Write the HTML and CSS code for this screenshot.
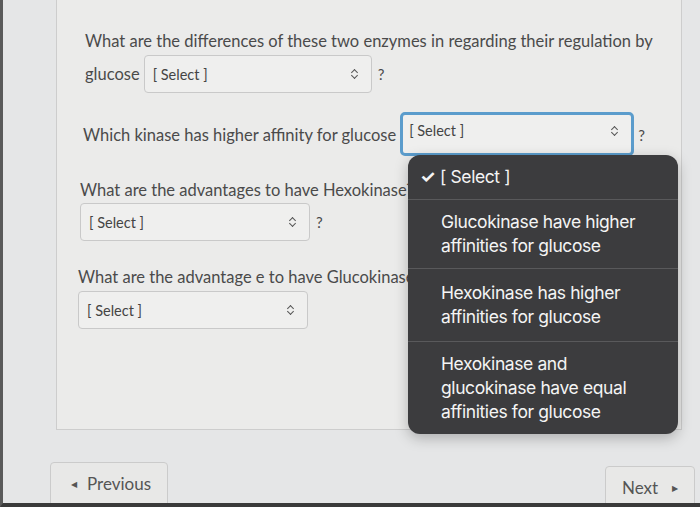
FILE: index.html
```html
<!DOCTYPE html>
<html lang="en">
<head>
    <meta charset="UTF-8">
    <meta name="viewport" content="width=device-width, initial-scale=1.0">
    <title>Quiz</title>
    <link rel="stylesheet" href="styles.css">
</head>
<body>
    <div class="screen">
        <div class="card">
            <div class="question q1">
                <div class="line">What are the differences of these two enzymes in regarding their regulation by</div>
                <div class="row">
                    <span>glucose</span>
                    <div class="select w228"><span>[ Select ]</span><span class="arrows"></span></div>
                    <span class="qmark">?</span>
                </div>
            </div>

            <div class="question q2">
                <div class="row">
                    <span>Which kinase has higher affinity for glucose</span>
                    <div class="select focused w234"><span>[ Select ]</span><span class="arrows"></span></div>
                    <span class="qmark">?</span>
                </div>
            </div>

            <div class="question q3">
                <div class="line">What are the advantages to have Hexokinase?</div>
                <div class="row">
                    <div class="select w230"><span>[ Select ]</span><span class="arrows"></span></div>
                    <span class="qmark">?</span>
                </div>
            </div>

            <div class="question q4">
                <div class="line">What are the advantage e to have Glucokinase?</div>
                <div class="row">
                    <div class="select w230"><span>[ Select ]</span><span class="arrows"></span></div>
                </div>
            </div>

            <!-- open native picker for the second select -->
            <ul class="menu">
                <li class="checked"><span class="check">&#10003;</span>[ Select ]</li>
                <li>Glucokinase have higher<br>affinities for glucose</li>
                <li class="tall">Hexokinase has higher<br>affinities for glucose</li>
                <li>Hexokinase and<br>glucokinase have equal<br>affinities for glucose</li>
            </ul>
        </div>

        <div class="footer">
            <button class="nav-btn prev"><span class="tri">&#9664;</span>Previous</button>
            <button class="nav-btn next">Next<span class="tri">&#9654;</span></button>
        </div>
    </div>
</body>
</html>
```

FILE: styles.css
```css
html, body {
    margin: 0;
    padding: 0;
}
body {
    width: 700px;
    height: 507px;
    overflow: hidden;
    background-color: #e5e6e7;
    font-family: Lato, 'Open Sans', sans-serif;
    color: #4a4a4a;
    border-left: 3px solid #5a5a5a;
    box-sizing: border-box;
    border-bottom: 4px solid #3a3a3a;
}
.screen {
    height: 503px;
}
.card {
    position: relative;
    margin: 0 18px 0 53px;
    height: 430px;
    box-sizing: border-box;
    border: 1px solid #cdcdcd;
    border-top: none;
    background-color: #ebebea;
    padding: 29px 0 0 27px;
    font-size: 16.5px;
}
.line {
    height: 24px;
    line-height: 24px;
    white-space: nowrap;
}
.row {
    display: flex;
    align-items: center;
    gap: 4px;
    white-space: nowrap;
}
.q1 {
    margin-left: 1px;
}
.q1 .row {
    margin-top: 2px;
}
.q2 {
    margin-top: 21px;
    margin-left: -1px;
}
.q3 {
    margin-top: 22px;
    margin-left: -4px;
}
.q4 {
    margin-top: 24px;
    margin-left: -6px;
}
.q3 .row {
    margin-top: 1px;
}
.q4 .row {
    margin-top: 2px;
}
.select {
    display: flex;
    align-items: center;
    justify-content: space-between;
    height: 38px;
    box-sizing: border-box;
    padding: 0 12px 0 8px;
    background-color: #efefee;
    border: 1px solid #c9c9c9;
    border-radius: 4px;
    font-size: 14.5px;
    color: #444;
}
.select.focused {
    height: 44px;
    border: 3px solid #5b9ccc;
    border-radius: 5px;
    padding-left: 6px;
    align-items: flex-start;
    padding-top: 7px;
    margin-top: -2px;
}
.select.focused .arrows {
    margin-top: 4px;
}
.w228 { width: 228px; }
.w230 { width: 230px; }
.w234 { width: 234px; }
.arrows {
    position: relative;
    width: 8px;
    height: 10px;
}
.arrows::before, .arrows::after {
    content: "";
    position: absolute;
    left: 1px;
    width: 4px;
    height: 4px;
    border-left: 1.6px solid #555;
    border-top: 1.6px solid #555;
}
.arrows::before {
    top: 1px;
    transform: rotate(45deg);
}
.arrows::after {
    top: 4px;
    transform: rotate(-135deg);
}
.qmark {
    font-size: 15px;
    margin-left: 2px;
}
.q2 .qmark {
    margin-left: 0;
}
.menu {
    position: absolute;
    left: 351px;
    top: 155px;
    width: 270px;
    margin: 0;
    padding: 0;
    list-style: none;
    background-color: #3c3c3e;
    border-radius: 12px;
    font-family: Inter, Roboto, 'Liberation Sans', sans-serif;
    font-size: 17.5px;
    line-height: 24px;
    letter-spacing: -0.4px;
    color: #f4f4f4;
    box-shadow: 0 4px 14px rgba(0, 0, 0, 0.25);
}
.menu li {
    padding: 10px 10px 10px 33px;
    border-top: 1px solid #59595b;
}
.menu li:first-child {
    border-top: none;
}
.menu li.tall {
    padding-top: 12px;
    padding-bottom: 12px;
}
.check {
    display: inline-block;
    width: 20px;
    margin-left: -21px;
    font-weight: 700;
}
.footer {
    display: flex;
    justify-content: space-between;
    align-items: flex-start;
    margin-top: 32px;
    padding: 0 5px 0 47px;
}
.nav-btn {
    font-family: Lato, 'Open Sans', sans-serif;
    font-size: 17px;
    color: #555;
    background-color: #e8e8e7;
    border: 1px solid #cbcbcb;
    border-radius: 4px;
    height: 50px;
    padding: 0 14px 8px;
}
.prev {
    width: 118px;
    text-align: left;
    padding-left: 30px;
}
.next {
    margin-top: 4px;
    width: 90px;
    padding-left: 16px;
    text-align: left;
}
.tri {
    font-size: 8px;
    vertical-align: 3px;
    color: #555;
}
.prev .tri {
    margin-right: 10px;
    margin-left: -10px;
}
.next .tri {
    margin-left: 14px;
}
```
